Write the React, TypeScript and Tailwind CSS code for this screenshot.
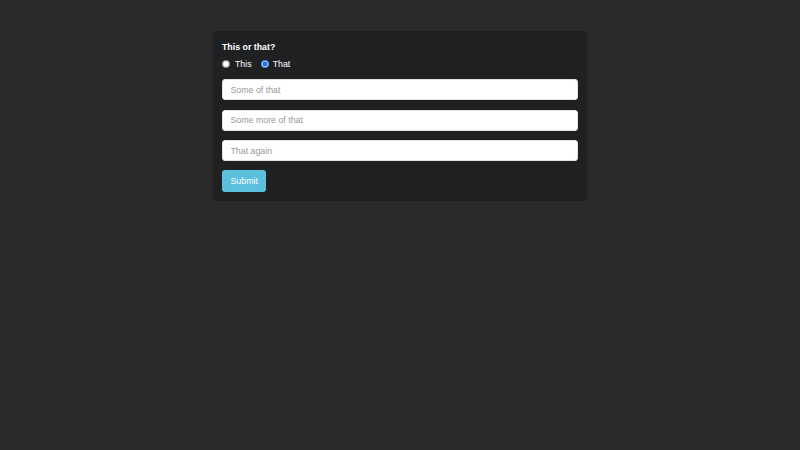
import { useState } from 'react';

const fieldClass =
  'h-[21px] rounded-[3px] border border-[#e4e4e4] bg-white px-[7.5px] text-[8.8px] text-gray-800 outline-none placeholder:text-[#999999]';

export default function App() {
  const [choice, setChoice] = useState('that');

  return (
    <div className="min-h-screen w-full bg-[#2a2a2a] pt-[31px] font-['Liberation_Sans',Arial,sans-serif]">
      <form className="mx-auto flex w-[374px] flex-col bg-[#1f2022] px-[9px] pt-[9px] pb-[9px]" onSubmit={(e) => e.preventDefault()}>
        <div className="h-[14px] text-[8.8px] font-bold leading-[14px] text-white">This or that?</div>
        <div className="mt-[3px] flex h-[14px] items-center text-[8.8px] leading-[14px] text-white">
          <label className="flex items-center gap-[5px]">
            <input
              type="radio"
              name="pick"
              checked={choice === 'this'}
              onChange={() => setChoice('this')}
              className="m-0 h-[8px] w-[8px] accent-[#1a73e8]"
            />
            This
          </label>
          <label className="ml-[9px] flex items-center gap-[4px]">
            <input
              type="radio"
              name="pick"
              checked={choice === 'that'}
              onChange={() => setChoice('that')}
              className="m-0 h-[8px] w-[8px] accent-[#1a73e8]"
            />
            That
          </label>
        </div>
        <input placeholder="Some of that" className={`mt-[8px] ${fieldClass}`} />
        <input placeholder="Some more of that" className={`mt-[9.5px] ${fieldClass}`} />
        <input placeholder="That again" className={`mt-[9.5px] ${fieldClass}`} />
        <div className="mt-[9px] flex">
          <button type="submit" className="h-[22px] rounded-[3px] bg-[#5bc0de] px-[8.5px] text-[8.8px] leading-none text-white">
            Submit
          </button>
        </div>
      </form>
    </div>
  );
}
